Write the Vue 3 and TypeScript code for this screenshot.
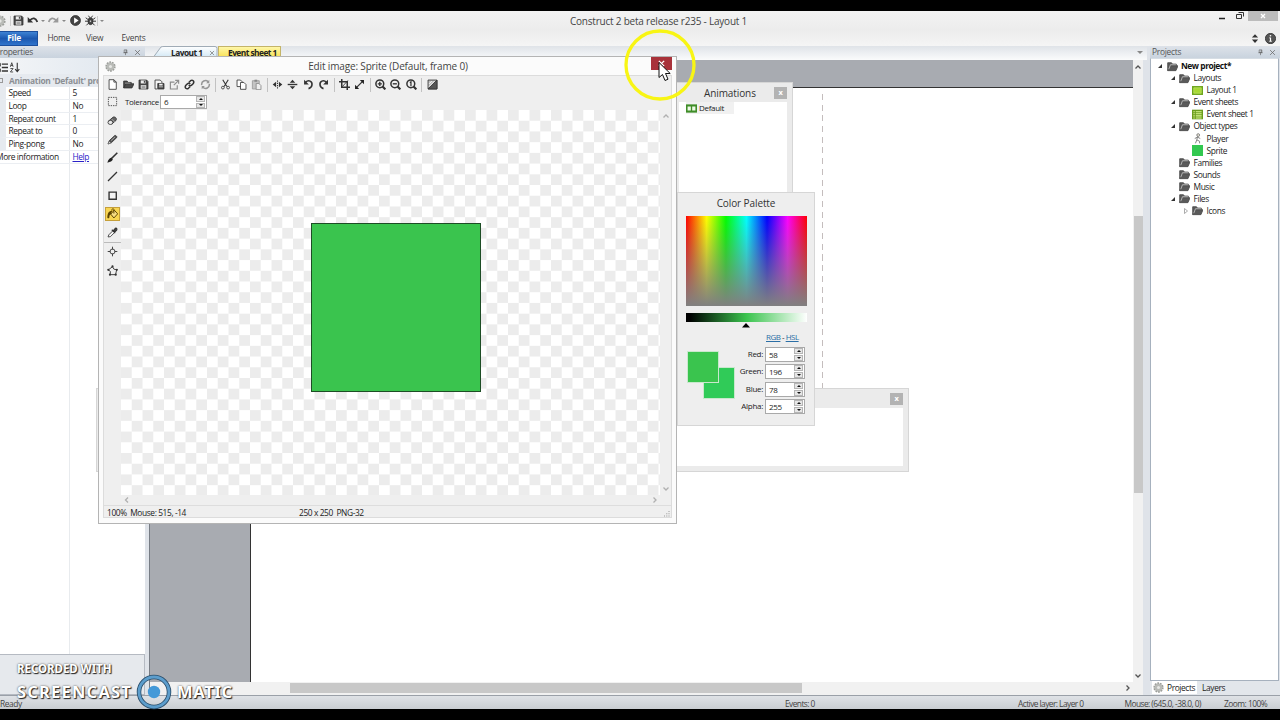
<script setup lang="ts">
interface TreeNode {
  label: string
  level: number
  icon: string
  arrow?: 'open' | 'closed'
  bold?: boolean
}

const icons: Record<string, string> = {
  gear: '<circle cx="8" cy="8" r="6" fill="#c4c6c2" stroke="#9b9d99" stroke-width="3" stroke-dasharray="2.4 1.3"/><circle cx="8" cy="8" r="5.500" fill="#b9bbb7" stroke="none"/><circle cx="8" cy="8" r="2.200" fill="#e6e7e4" stroke="none"/>',
  file: '<path d="M3 1h7L13.500 4.500V15H3zM10 1v3.500h3.500" fill="#fff"/>',
  open: '<path d="M1 13V3h5l1.500 2H12v2M1 13l3-6h12l-3 6z" fill="#4b4b4b"/><path d="M3 6h8" stroke="#aaa"/>',
  save: '<path d="M1.500 1.500h11l2 2v11h-13z" fill="#444"/><path d="M4 2h7v4.500H4z" fill="#eee" stroke="none"/><path d="M8.500 2.500h1.500v3H8.500z" fill="#333" stroke="none"/><path d="M4 9h8v5H4z" fill="#f3f3f3" stroke="none"/><path d="M5 10.700h6M5 12.500h6" stroke-width=".7"/>',
  export: '<path d="M5 14.500H1.500v-13H9L11.500 4v2" fill="#f5f5f5"/><path d="M5.500 6.500h9v8h-9z" fill="#444"/><path d="M7.500 7h5v2.500h-5zM7 11h6v1H7z" fill="#eee" stroke="none"/>',
  popout: '<path d="M8 4.500H2v10h10V9M7 9l6-6M9 2h5v5" stroke="#8c8c8c" stroke-width="1.700"/>',
  link: '<g stroke-width="2.200"><path d="M7 5l2.500-2.500c3-2 6 1 4 4L11 9c-1.500 1.300-3 1-4-.3"/><path d="M9 11l-2.500 2.500c-3 2-6-1-4-4L5 7c1.500-1.300 3-1 4 .3"/></g>',
  refresh: '<g stroke="#969696" stroke-width="2.200"><path d="M2.500 9C1.500 3 8 .5 12 4M13.500 7c1 6-5.500 8.500-9.500 5"/></g><path d="M13.500 1v5H9zM2.500 15v-5H7z" fill="#969696" stroke="none"/>',
  cut: '<path d="M4 1l6 10M12 1L6 11" stroke-width="1.600"/><circle cx="4.200" cy="12.500" r="2"/><circle cx="11.800" cy="12.500" r="2"/>',
  copy: '<path d="M1.500 1.500h5L9 4v7H1.500z" fill="#fff"/><path d="M6.500 5h5L14.500 8v7h-8z" fill="#fff"/>',
  paste: '<path d="M2 2.500h10v12H2z" fill="#c4c4c4" stroke="#999"/><path d="M5 1h4v3H5z" fill="#888" stroke="none"/><path d="M7.500 6.500h4l3 3v6h-7z" fill="#eee" stroke="#888"/>',
  mirror: '<path d="M8 2v12" stroke-dasharray="2 1.300" stroke-width="1.500"/><path d="M6 4v8L1 8zM10 4v8L15 8z" fill="#333" stroke="none"/>',
  flip: '<path d="M1 8h14" stroke-width="2"/><path d="M4 5.500h8L8 1zM4 10.500h8L8 15z" fill="#333" stroke="none"/>',
  ccw: '<path d="M3.500 5C8 .5 14 3 13 9c-.5 3-3 4.500-5 5" stroke-width="2.300"/><path d="M1.500 1v7H8.500z" fill="#333" stroke="none"/>',
  cw: '<path d="M12.500 5C8 .5 2 3 3 9c.5 3 3 4.500 5 5" stroke-width="2.300"/><path d="M14.500 1v7H7.500z" fill="#333" stroke="none"/>',
  crop: '<path d="M4 0v12h12M0 4h12v12" stroke-width="2.200"/><path d="M5 11l8-9"/>',
  resize: '<path d="M3.500 12.500l9-9" stroke-width="1.800"/><path d="M14.500 1.500v6l-6-6zM1.500 14.500v-6l6 6z" fill="#222" stroke="none"/>',
  zoomin: '<circle cx="7" cy="7" r="5.700" stroke-width="2.200"/><path d="M11 11l4 4" stroke-width="3.200"/><path d="M4 7h6M7 4v6" stroke-width="2"/>',
  zoomout: '<circle cx="7" cy="7" r="5.700" stroke-width="2.200"/><path d="M11 11l4 4" stroke-width="3.200"/><path d="M4 7h6" stroke-width="2"/>',
  zoomone: '<circle cx="7" cy="7" r="5.700" stroke-width="2.200"/><path d="M11 11l4 4" stroke-width="3.200"/><path d="M5.500 5L7.200 4v6.500" stroke-width="1.800"/>',
  contrast: '<path d="M1.500 1.500h13v13h-13z" fill="#bbb"/><path d="M14.500 1.500v13h-13z" fill="#555"/><path d="M3 7l4-4M3 11l8-8" stroke="#fff"/>',
  marquee: '<path d="M2 2h12v12H2z" stroke-dasharray="2 1.400" stroke-width="1.200"/>',
  eraser: '<path d="M2 9l7-6c3-1 6 2 4 5l-6 5z" fill="#666"/><ellipse cx="5" cy="10.800" rx="3.600" ry="3" fill="#e8e8e8"/><path d="M7 6l4 4" stroke="#bbb"/>',
  pencil: '<path d="M1.500 14.500l2-5 8-7.500c2 0 3 1.500 2.800 3L6.500 12.500z" fill="#555"/><path d="M6 9.500l5.500-5" stroke="#bbb"/><path d="M1.500 14.500l1.500-4 3 2.500z" fill="#ddd" stroke="#444" stroke-width=".6"/>',
  brush: '<path d="M6 10L15 1" stroke-width="2.200"/><path d="M.5 15.500c1.500-4.500 3-6.500 5.500-7L8.500 11c-1 2.500-3.500 3.500-8 4.500z" fill="#222" stroke="none"/>',
  line: '<path d="M1.500 14.500l13-13" stroke-width="1.800"/>',
  rect: '<path d="M3 3h10.500v10.500H3z" fill="#f3f3f3" stroke-width="2"/>',
  bucket: '<path d="M5.500 9l5-6 5 5.500-5.500 6z" fill="#f7dd84" stroke="#5c4300" stroke-width="1.400"/><path d="M10 8V2C9 0 7 1 7 4" stroke="#5c4300" stroke-width="1.400"/><path d="M7.500 4.500C2.500 4 .5 8 .5 14c1 1.500 3 1 3-1 0-2 .5-3 2-4z" fill="#5c4300" stroke="none"/>',
  dropper: '<path d="M1.500 14.500l1-3 6-6 2.500 2.500-6 6z" fill="#f5f5f5"/><path d="M7 4l5 5M9 5.500l3-3.500c2-1 3 1 2 2.500L11 7.500z" fill="#444" stroke-width="1.700"/>',
  origin: '<circle cx="8" cy="8" r="3.600" stroke-width="1.300"/><path d="M8 1v4M8 11v4M1 8h4M11 8h4" stroke-width="1.300"/>',
  polygon: '<path d="M8 2.500L10 6l4 1-1.500 7h-8L5 9.500 2 7z" stroke-width="1.300"/><g fill="#333" stroke="none"><circle cx="8" cy="2" r="1.600"/><circle cx="14.300" cy="7" r="1.600"/><circle cx="12.700" cy="14" r="1.600"/><circle cx="4.300" cy="14" r="1.600"/><circle cx="1.900" cy="7" r="1.600"/></g>',
  undo: '<path d="M4 8c4-5 9-4 11 2" stroke-width="2.600"/><path d="M1 3v8h8z" fill="#333" stroke="none"/>',
  redo: '<path d="M12 8C8 3 3 4 1 10" stroke="#999" stroke-width="2.600"/><path d="M15 3v8H7z" fill="#999" stroke="none"/>',
  play: '<circle cx="8" cy="8" r="7.200" fill="#444" stroke="#333"/><path d="M6 3.800v8.400L12.500 8z" fill="#fff" stroke="none"/>',
  bug: '<ellipse cx="8" cy="9" rx="3.600" ry="5" fill="#444"/><path d="M1 4l4 3M15 4l-4 3M0 9h16M2 15l4-4M14 15l-4-4M5 1l2 3M11 1L9 4" stroke-width="1.400"/><circle cx="8" cy="9" r="1.700" fill="#ddd"/>',
  folder: '<path d="M1 14V2.500h5.500L8 4.500h5.500V7M1 14l3-7h12l-3 7z" fill="#5a5a5a" stroke="#4a4a4a"/><path d="M2.500 12L5 5.500h8" stroke="#c4c4c4" stroke-width="1.300"/>',
  layout: '<path d="M0 1.500h16v13H0z" fill="#6ca51a" stroke="none"/><path d="M2.500 4h11v8h-11z" fill="#a6d834" stroke="#d0ec7c" stroke-width=".8"/>',
  sheet: '<path d="M0 1h16v14H0z" fill="#6a9c1c" stroke="none"/><path d="M2 4h2M2 7h2M2 10h2M2 13h2M5.500 4H14M5.500 7H14M5.500 10H14M5.500 13H14" stroke="#daf590" stroke-width="1.500"/>',
  player: '<g stroke="#777" stroke-width="1.300"><circle cx="9" cy="3" r="2" fill="#f3efe1"/><path d="M8 5L7 10l4 2v3M7 10l-2 5M8 6l4 2M8 6L4 8"/></g>',
  sprite: '<path d="M0 0h16v16H0z" fill="#32c850" stroke="none"/>',
  az: '<path d="M12 1v12M9 10.500l3 3.500 3-3.500" stroke-width="1.600"/><path d="M2 7l2-6 2 6M2.500 5h3M2 9.500h4l-4 5h4" stroke-width="1.200"/>',
  cat: '<path d="M7 3h9M7 8h9M7 13h9" stroke-width="2"/><path d="M1 2h4v4H1zM1 10h4v4H1z"/>',
  info: '<circle cx="8" cy="8" r="7.500" fill="#555" stroke="#333"/><path d="M8 7v5M6.500 7H8M6.300 12h3.500" stroke="#fff" stroke-width="1.700"/><circle cx="8" cy="4" r="1.200" fill="#fff" stroke="none"/>',
  updown: '<path d="M3 6.500h10L8 1zM3 9.500h10L8 15z" fill="#333" stroke="none"/>',
  pin: '<path d="M5 2h6v6H5zM9.500 2v6M3 8.500h10M8 9v5" stroke="#555" stroke-width="1.300"/>',
  cross: '<path d="M2.500 2.500l11 11M13.500 2.500l-11 11" stroke="#666" stroke-width="1.700"/>',
  frame: '<path d="M0 2h16v12H0z" fill="#3f8d28" stroke="none"/><path d="M2.300 5h4.700v6H2.300zM9 5h4.700v6H9z" fill="#eefae6" stroke="none"/>',
}

const toolbar: string[][] = [
  ['file', 'open', 'save', 'export', 'popout', 'link', 'refresh'],
  ['cut', 'copy', 'paste'],
  ['mirror', 'flip', 'ccw', 'cw'],
  ['crop', 'resize'],
  ['zoomin', 'zoomout', 'zoomone'],
  ['contrast'],
]
const tools = ['marquee', 'eraser', 'pencil', 'brush', 'line', 'rect', 'bucket', 'dropper', 'origin', 'polygon']

const properties = [
  { name: 'Speed', value: '5' },
  { name: 'Loop', value: 'No' },
  { name: 'Repeat count', value: '1' },
  { name: 'Repeat to', value: '0' },
  { name: 'Ping-pong', value: 'No' },
]

const tree: TreeNode[] = [
  { label: 'New project*', level: 0, icon: 'folder', arrow: 'open', bold: true },
  { label: 'Layouts', level: 1, icon: 'folder', arrow: 'open' },
  { label: 'Layout 1', level: 2, icon: 'layout' },
  { label: 'Event sheets', level: 1, icon: 'folder', arrow: 'open' },
  { label: 'Event sheet 1', level: 2, icon: 'sheet' },
  { label: 'Object types', level: 1, icon: 'folder', arrow: 'open' },
  { label: 'Player', level: 2, icon: 'player' },
  { label: 'Sprite', level: 2, icon: 'sprite' },
  { label: 'Families', level: 1, icon: 'folder' },
  { label: 'Sounds', level: 1, icon: 'folder' },
  { label: 'Music', level: 1, icon: 'folder' },
  { label: 'Files', level: 1, icon: 'folder', arrow: 'open' },
  { label: 'Icons', level: 2, icon: 'folder', arrow: 'closed' },
]

const channels = [
  { name: 'Red:', value: 58 },
  { name: 'Green:', value: 196 },
  { name: 'Blue:', value: 78 },
  { name: 'Alpha:', value: 255 },
]
</script>

<template>
  <div class="screen">
    <header class="titlebar">
      <div class="quick">
        <svg class="ico q-gear" viewBox="0 0 16 16" v-html="icons.gear" />
        <i class="qsep" />
        <svg class="ico q-save" viewBox="0 0 16 16" v-html="icons.save" />
        <svg class="ico q-undo" viewBox="0 0 16 16" v-html="icons.undo" />
        <i class="dd" />
        <svg class="ico q-redo" viewBox="0 0 16 16" v-html="icons.redo" />
        <i class="dd" />
        <svg class="ico q-play" viewBox="0 0 16 16" v-html="icons.play" />
        <svg class="ico q-bug" viewBox="0 0 16 16" v-html="icons.bug" />
        <i class="qsep last" />
        <i class="dd more" />
      </div>
      <span class="app-title">Construct 2 beta release r235 - Layout 1</span>
      <div class="winbtns">
        <svg width="62" height="15" viewBox="0 0 62 15">
          <path d="M3 7.500h6" stroke="#222" stroke-width="1.500" />
          <path d="M22.500 1.500h5v4M20.500 3.500h5v4h-5z" fill="none" stroke="#333" />
          <path d="M32 0h30v10H32z" fill="#bcbcbc" />
          <path d="M45 3l4 4M49 3l-4 4" stroke="#fff" stroke-width="1.300" />
        </svg>
      </div>
    </header>

    <nav class="ribbon">
      <b class="file">File</b>
      <span class="r-home">Home</span>
      <span class="r-view">View</span>
      <span class="r-events">Events</span>
      <svg class="ico r-ud" viewBox="0 0 16 16" v-html="icons.updown" />
      <svg class="ico r-info" viewBox="0 0 16 16" v-html="icons.info" />
    </nav>

    <main class="dock">
      <aside class="left">
        <div class="phead">
          <span class="pname">Properties</span>
          <svg class="ico tiny" viewBox="0 0 16 16" v-html="icons.pin" />
          <svg class="ico tiny" viewBox="0 0 16 16" v-html="icons.cross" />
        </div>
        <div class="ptools">
          <svg class="ico" viewBox="0 0 16 16" v-html="icons.cat" />
          <svg class="ico" viewBox="0 0 16 16" v-html="icons.az" />
        </div>
        <div class="pgrid">
          <div class="pcat"><i class="minus" /><b>Animation 'Default' properties</b></div>
          <div v-for="p in properties" :key="p.name" class="prow">
            <span class="pn">{{ p.name }}</span><span class="pv">{{ p.value }}</span>
          </div>
          <div class="prow info"><span class="pn">More information</span><span class="pv"><u>Help</u></span></div>
          <div class="prest" />
        </div>
        <div class="pdesc" />
      </aside>

      <section class="center">
        <div class="tabs">
          <div class="tab active">
            <svg class="tabshape" viewBox="0 0 68 13" preserveAspectRatio="none">
              <defs>
                <linearGradient id="tb" x2="0" y2="1"><stop offset="0" stop-color="#fff" /><stop offset="1" stop-color="#cbe4f3" /></linearGradient>
              </defs>
              <path d="M0 13L9 1Q10 .5 12 .5H63q2 0 2 2V13" fill="url(#tb)" stroke="#8c99a6" stroke-width=".8" />
            </svg>
            <b>Layout 1</b>
            <svg class="ico tabx" viewBox="0 0 16 16" v-html="icons.cross" />
          </div>
          <div class="tab sheet"><b>Event sheet 1</b></div>
          <i class="dd tabmenu" />
        </div>
        <div class="work">
          <div class="stage">
            <div class="margin-left" />
            <div class="page">
              <div class="page-top" />
              <div class="page-body"><div class="bounds" /></div>
            </div>
          </div>
          <div class="vscroll">
            <svg class="chev" viewBox="0 0 8 6"><path d="M1.500 4.500L4 2l2.500 2.500" /></svg>
            <div class="vthumb" />
            <svg class="chev" viewBox="0 0 8 6"><path d="M1.500 1.500L4 4l2.500-2.500" /></svg>
          </div>
        </div>
        <div class="hscroll">
          <div class="hthumb" />
          <svg class="chev hright" viewBox="0 0 6 8"><path d="M1.500 1.500L4 4 1.500 6.500" /></svg>
        </div>
      </section>

      <aside class="right">
        <div class="phead">
          <span class="pname">Projects</span>
          <svg class="ico tiny" viewBox="0 0 16 16" v-html="icons.pin" />
          <svg class="ico tiny" viewBox="0 0 16 16" v-html="icons.cross" />
        </div>
        <div class="tree">
          <div v-for="n in tree" :key="n.label" class="node" :class="['l' + n.level, { bold: n.bold }]">
            <svg class="arrow" viewBox="0 0 6 6">
              <path v-if="n.arrow === 'open'" d="M5 1v4H1z" fill="#333" />
              <path v-else-if="n.arrow === 'closed'" d="M1.500 .5v5L4.500 3z" fill="#fff" stroke="#888" stroke-width=".7" />
            </svg>
            <svg class="ico" viewBox="0 0 16 16" v-html="icons[n.icon]" />
            <span>{{ n.label }}</span>
          </div>
        </div>
        <div class="ptabs">
          <div class="ptab on"><svg class="ico" viewBox="0 0 16 16" v-html="icons.gear" /><span>Projects</span></div>
          <div class="ptab">Layers</div>
        </div>
      </aside>
    </main>

    <footer class="status">
      <span class="s1">Ready</span>
      <span class="s2">Events: 0</span>
      <span class="s3">Active layer: Layer 0</span>
      <span class="s4">Mouse: (645.0, -38.0, 0)</span>
      <span class="s5">Zoom: 100%</span>
    </footer>

    <div class="win frames">
      <div class="whead"><span class="wclose">x</span></div>
      <div class="wbody" />
    </div>

    <div class="win anims">
      <div class="whead"><span class="wtitle">Animations</span><span class="wclose">x</span></div>
      <div class="wbody">
        <div class="anim"><svg class="ico" viewBox="0 0 16 16" v-html="icons.frame" /><span>Default</span></div>
      </div>
    </div>

    <div class="win palette">
      <div class="ptitle">Color Palette</div>
      <div class="hues" />
      <div class="lum" />
      <svg class="mark" viewBox="0 0 8 5"><path d="M4 0l4 4.500H0z" fill="#000" /></svg>
      <div class="modes"><u>RGB</u> - <u>HSL</u></div>
      <div class="mix">
        <div class="swatches"><i class="sw back" /><i class="sw front" /></div>
        <div class="fields">
          <div v-for="c in channels" :key="c.name" class="field">
            <label>{{ c.name }}</label>
            <div class="num"><span>{{ c.value }}</span><div class="spin"><i class="up" /><i class="down" /></div></div>
          </div>
        </div>
      </div>
    </div>

    <div class="dialog">
      <div class="dhead">
        <svg class="ico" viewBox="0 0 16 16" v-html="icons.gear" />
        <span class="dtitle">Edit image: Sprite (Default, frame 0)</span>
        <span class="dclose"><svg viewBox="0 0 8 8"><path d="M1 1l6 6M7 1L1 7" /></svg></span>
      </div>
      <div class="dbody">
        <div class="tbar">
          <div v-for="(g, i) in toolbar" :key="i" class="tgroup">
            <span v-for="n in g" :key="n" class="tcell"><svg class="ico" viewBox="0 0 16 16" v-html="icons[n]" /></span>
          </div>
        </div>
        <div class="dmain">
          <div class="tools">
            <span v-for="t in tools" :key="t" class="tool" :class="t"><svg class="ico" viewBox="0 0 16 16" v-html="icons[t]" /></span>
          </div>
          <div class="editor">
            <div class="opts">
              <label>Tolerance</label>
              <div class="num"><span>6</span><div class="spin"><i class="up" /><i class="down" /></div></div>
            </div>
            <div class="view">
              <div class="checker"><div class="sprite" /></div>
              <div class="dv">
                <svg class="chev" viewBox="0 0 8 6"><path d="M1.500 4.500L4 2l2.500 2.500" /></svg>
                <svg class="chev" viewBox="0 0 8 6"><path d="M1.500 1.500L4 4l2.500-2.500" /></svg>
              </div>
            </div>
            <div class="dh">
              <svg class="chev" viewBox="0 0 6 8"><path d="M4 1.500L1.500 4 4 6.500" /></svg>
              <svg class="chev" viewBox="0 0 6 8"><path d="M1.500 1.500L4 4 1.500 6.500" /></svg>
            </div>
          </div>
        </div>
        <div class="dstatus">
          <span class="ds1">100%&nbsp; Mouse: 515, -14</span>
          <span class="ds2">250 x 250&nbsp; PNG-32</span>
          <svg class="grip" viewBox="0 0 6 6"><path d="M4.500 0h1v1h-1zM4.500 2.300h1v1h-1zM4.500 4.600h1v1h-1zM2.300 2.300h1v1h-1zM2.300 4.600h1v1h-1zM0 4.600h1v1H0z" fill="#999" /></svg>
        </div>
      </div>
    </div>

    <div class="brand">
      <div class="b1">RECORDED WITH</div>
      <div class="b2">
        <span class="bs">SCREENCAST</span>
        <svg class="ring" viewBox="0 0 36 36">
          <circle cx="18" cy="18" r="15" fill="none" stroke="#2c4f6c" stroke-width="4.500" />
          <circle cx="18" cy="18" r="15" fill="none" stroke="#5c9dcc" stroke-width="2.800" />
          <circle cx="18" cy="18" r="6.200" fill="#4499d8" />
        </svg>
        <span class="bm">MATIC</span>
      </div>
    </div>

    <svg class="pointer" viewBox="0 0 76 76">
      <circle cx="38" cy="38" r="34" fill="none" stroke="#f8f514" stroke-width="3.300" />
      <path d="M37 35.500v15l3.500-3 2.500 6 3-1.300-2.500-5.700h4.700z" fill="#fff" stroke="#111" stroke-width="1" />
    </svg>
  </div>
</template>

<style>
body {
  background: #000;
  overflow: hidden;
}
</style>

<style scoped>
* {
  box-sizing: border-box;
}
.screen {
  position: relative;
  width: 1280px;
  height: 720px;
  padding: 11px 0;
  display: flex;
  flex-direction: column;
  overflow: hidden;
  background: #000;
  color: #222;
  font: 8.400px/12px "Open Sans", "Noto Sans", sans-serif;
  letter-spacing: -0.400px;
  white-space: nowrap;
}
.ico {
  width: 11px;
  height: 11px;
  flex: none;
  fill: none;
  stroke: #333;
  stroke-width: 1.2;
}
.chev {
  width: 8px;
  height: 6px;
  fill: none;
  stroke: #555;
  stroke-width: 1.3;
}
.dd {
  width: 0;
  height: 0;
  flex: none;
  border: 2px solid transparent;
  border-top: 2.500px solid #888;
  border-bottom: 0;
}

.titlebar {
  height: 19px;
  flex: none;
  display: flex;
  justify-content: space-between;
  background: linear-gradient(#f3f3f3, #ececec);
}
.quick {
  display: flex;
  align-items: center;
  width: 566px;
  margin-left: -6px;
}
.q-gear {
  width: 12px;
  height: 12px;
}
.qsep {
  width: 1px;
  height: 10px;
  margin: 0 1px 0 4px;
  background: #ccc;
}
.q-save {
  margin-left: 1px;
}
.q-undo {
  margin: 0 3px 0 3px;
}
.q-redo {
  margin: 0 3px;
}
.q-play {
  margin-left: 4px;
}
.q-bug {
  margin-left: 4px;
}
.qsep.last {
  margin: 0 2px 0 1px;
}
.app-title {
  font-size: 10px;
  line-height: 20px;
  letter-spacing: -0.210px;
  color: #444;
}
.winbtns {
  width: 523px;
  display: flex;
  justify-content: flex-end;
  padding: 0 2px 0 0;
}

.ribbon {
  height: 16px;
  flex: none;
  display: flex;
  align-items: center;
  background: linear-gradient(#ececec, #f5f5f5);
  color: #444;
}
.file {
  width: 37.500px;
  height: 15px;
  border: 1px solid #1b4f9e;
  border-left: 0;
  background: linear-gradient(#3e83d4, #1c58b0 50%, #2f74cc);
  color: #fff;
  line-height: 12px;
  text-align: right;
  padding-right: 15.500px;
  letter-spacing: -0.200px;
}
.ribbon span {
  letter-spacing: -0.300px;
}
.r-home {
  width: 38.500px;
  margin-left: 10px;
}
.r-view {
  width: 35.500px;
}
.r-ud {
  margin-left: auto;
  width: 10px;
}
.r-info {
  margin: 0 4px 0 5px;
}

.dock {
  flex: 1;
  min-height: 0;
  display: flex;
  background: #dfe3e9;
  border-bottom: 1px solid #9aa0a8;
}
.phead {
  height: 12px;
  flex: none;
  display: flex;
  align-items: center;
  gap: 5px;
  padding: 0 4px 0 2px;
  background: linear-gradient(#dde2e9, #c9d3de);
  color: #555;
}
.pname {
  flex: 1;
  letter-spacing: -0.250px;
}
.ico.tiny {
  width: 7px;
  height: 7px;
}
.left {
  width: 145px;
  flex: none;
  display: flex;
  flex-direction: column;
}
.left .pname {
  margin-left: -7px;
}
.ptools {
  height: 16px;
  flex: none;
  display: flex;
  align-items: center;
  gap: 1px;
  padding: 2px 0 0 0;
  background: linear-gradient(90deg, #f3f5f7, #dde5ee);
}
.ptools .ico {
  margin-left: -3px;
  margin-right: 3px;
}
.pgrid {
  flex: 1;
  display: flex;
  flex-direction: column;
  background: #fff;
}
.pcat {
  height: 13px;
  display: flex;
  align-items: center;
  background: #e6eaef;
  color: #8c8f94;
}
.pcat b {
  width: 89px;
  overflow: hidden;
  margin-left: 6px;
  letter-spacing: -0.270px;
}
.minus {
  width: 3px;
  height: 5px;
  border: 1px solid #999;
  border-left: 0;
}
.prow {
  height: 12.800px;
  display: flex;
  border-left: 6px solid #e6eaef;
  border-bottom: 1px solid #ebeef2;
}
.pn {
  width: 64px;
  padding-left: 2.500px;
  border-right: 1px solid #e3e6ea;
}
.pv {
  padding-left: 2.500px;
}
.info {
  border-left: 0;
}
.info .pn {
  width: 70px;
  padding: 0;
  text-indent: -4px;
}
.info u {
  color: #2b22c8;
}
.prest {
  flex: 1;
  width: 70px;
  border-right: 1px solid #e8ebee;
}
.pdesc {
  height: 41px;
  flex: none;
  border: 1px solid #b5bac2;
  border-left: 0;
  background: #e6e9ed;
}

.center {
  width: 998px;
  flex: none;
  margin-left: 4px;
  display: flex;
  flex-direction: column;
  border-left: 1px solid #777c84;
}
.tabs {
  height: 14px;
  flex: none;
  display: flex;
  margin-left: -5px;
  padding-left: 7px;
  background: linear-gradient(#dfe3e8, #fafbfc);
}
.tab {
  height: 13px;
  position: relative;
  line-height: 13px;
  color: #222;
}
.tab.active {
  width: 66px;
  padding-left: 19px;
  display: flex;
  align-items: center;
}
.tabshape {
  position: absolute;
  left: 0;
  top: 0;
  width: 68px;
  height: 13px;
}
.tab b {
  position: relative;
  letter-spacing: -0.550px;
}
.tabx {
  position: relative;
  width: 6px;
  height: 6px;
  margin-left: auto;
  margin-right: 3px;
}
.tab.sheet {
  width: 63px;
  padding-left: 9px;
  background: linear-gradient(#fff7a8, #f6dd48);
  border: 1px solid #c4b468;
  border-bottom: 0;
  line-height: 11px;
}
.tabmenu {
  margin: 5px 4px 0 auto;
  border-width: 3px 3px 0;
}
.work {
  flex: 1;
  min-height: 0;
  display: flex;
}
.stage {
  flex: 1;
  display: flex;
  background: #a8abb1;
}
.margin-left {
  width: 100px;
}
.page {
  flex: 1;
  display: flex;
  flex-direction: column;
}
.page-top {
  height: 28px;
  margin-left: -1px;
  border-bottom: 1px solid #333;
}
.page-body {
  flex: 1;
  padding: 6px 0 0 571px;
  background: #fff;
  border-left: 1px solid #333;
}
.bounds {
  height: 300px;
  width: 1px;
  background: repeating-linear-gradient(#c4bdbd 0 6px, #fff 6px 10.700px);
}
.vscroll {
  width: 10px;
  display: flex;
  flex-direction: column;
  align-items: center;
  padding: 4px 0 3px;
  background: #f1f1f1;
}
.vthumb {
  width: 9px;
  height: 277px;
  margin: 146px 0 auto;
  background: #c8c8c8;
}
.hscroll {
  height: 13px;
  flex: none;
  display: flex;
  align-items: center;
  justify-content: space-between;
  padding: 0 12px 2px 140px;
  background: #f1f1f1;
}
.center .hscroll,
.center .work {
  margin-right: 4px;
}
.hthumb {
  width: 512px;
  height: 10px;
  background: #c8c8c8;
}
.hright {
  width: 6px;
  height: 8px;
}

.right {
  flex: 1;
  margin-left: 3px;
  display: flex;
  flex-direction: column;
}
.tree {
  flex: 1;
  margin-right: 1px;
  padding-top: 1px;
  background: #fff;
  border: 1px solid #a6b1be;
  border-top-color: #d6dde4;
}
.node {
  height: 12.080px;
  display: flex;
  align-items: center;
  padding-left: 6px;
}
.node.l1 {
  padding-left: 18.500px;
}
.node.l2 {
  padding-left: 31.500px;
}
.node .ico {
  margin: 0 3.500px 0 3.500px;
}
.arrow {
  width: 6px;
  height: 6px;
}
.bold {
  font-weight: 700;
  color: #111;
  letter-spacing: -0.450px;
}
.ptabs {
  height: 14px;
  flex: none;
  display: flex;
  padding-left: 2px;
  background: #e2e6eb;
}
.ptab {
  padding: 1px 5px 0;
}
.ptab.on {
  display: flex;
  align-items: center;
  padding: 0 2px 0 1px;
  background: #fff;
  height: 13px;
}
.ptab.on .ico {
  margin-right: 3px;
}

.status {
  height: 13px;
  flex: none;
  display: flex;
  background: linear-gradient(#dfe2e6, #c9cdd2);
  color: #444;
  line-height: 16px;
  letter-spacing: -0.560px;
}
.s1 {
  width: 785px;
  letter-spacing: -0.400px;
}
.s2 {
  width: 233px;
}
.s3 {
  width: 106.500px;
}
.s4 {
  width: 99.500px;
}
.s5 {
  letter-spacing: -0.500px;
}

.win {
  position: absolute;
  background: #ebebeb;
  border: 1px solid #d6d6d6;
}
.whead {
  display: flex;
  align-items: center;
}
.wtitle {
  flex: 1;
  font-size: 10px;
  letter-spacing: -0.100px;
  color: #333;
}
.wclose {
  width: 13px;
  height: 12px;
  margin-left: auto;
  background: #b3b3b3;
  color: #fff;
  font-size: 7.500px;
  font-weight: 700;
  line-height: 11px;
  text-align: center;
}
.wbody {
  background: #fff;
}
.frames {
  left: 96px;
  top: 388px;
  width: 813px;
  height: 84px;
}
.frames .whead {
  height: 19px;
  padding-right: 5px;
}
.frames .wbody {
  height: 58px;
  margin: 0 5px;
}
.anims {
  left: 676px;
  top: 82px;
  width: 117px;
  height: 120px;
}
.anims .whead {
  height: 19px;
  padding: 0 5px 0 27px;
}
.anims .wbody {
  height: 92px;
  margin: 0 5px 0 2px;
}
.anim {
  width: 48px;
  height: 12px;
  margin-left: 7px;
  display: flex;
  align-items: center;
  gap: 2px;
  background: #f1f1f1;
  font-size: 8px;
  letter-spacing: -0.300px;
}

.palette {
  left: 677px;
  top: 192px;
  width: 138px;
  height: 234px;
  padding: 0 8px;
  background: #eee;
}
.ptitle {
  height: 23px;
  font-size: 10px;
  line-height: 21px;
  letter-spacing: -0.100px;
  text-align: center;
  color: #333;
}
.hues {
  width: 121px;
  height: 90px;
  background: linear-gradient(rgba(128, 128, 128, 0), #808080), linear-gradient(90deg, #f00, #ff0 17%, #0f0 33%, #0ff 50%, #00f 67%, #f0f 84%, #f00);
}
.lum {
  width: 121px;
  height: 9px;
  margin-top: 7px;
  background: linear-gradient(90deg, #000 3%, #3ac44e 50%, #fff);
}
.mark {
  display: block;
  width: 8px;
  height: 5px;
  margin: 1px 0 0 56px;
}
.modes {
  height: 12px;
  margin-top: 3px;
  padding-left: 80px;
  font-size: 8px;
  letter-spacing: -0.500px;
}
.modes u {
  color: #2a6ea6;
}
.mix {
  display: flex;
  margin: 4px 1px 0 0;
}
.swatches {
  width: 49px;
  height: 49px;
  margin: 4px 0 0 1px;
  display: grid;
  grid-template: repeat(3, 16px) / repeat(3, 16px);
}
.sw {
  border: 1px solid #c9e8cd;
}
.back {
  grid-area: 2 / 2 / 4 / 4;
  background: #30cb58;
}
.front {
  grid-area: 1 / 1 / 3 / 3;
  background: #3ac44e;
}
.fields {
  flex: 1;
}
.field {
  height: 17.400px;
  display: flex;
  justify-content: flex-end;
  align-items: flex-start;
  gap: 2px;
  line-height: 14px;
  font-size: 8px;
  letter-spacing: -0.300px;
}
.num {
  width: 40px;
  height: 15px;
  display: flex;
  justify-content: space-between;
  padding: 0 1px 0 3px;
  background: #fff;
  border: 1px solid #a9a9a9;
  line-height: 13px;
}
.spin {
  width: 9px;
  display: flex;
  flex-direction: column;
  gap: 1px;
}
.spin i {
  flex: 1;
  display: flex;
  align-items: center;
  justify-content: center;
  background: #e6e6e6;
  border: 1px solid #b5b5b5;
}
.spin i::after {
  content: "";
  border: 2px solid transparent;
}
.spin .up::after {
  border-bottom-color: #111;
  border-top: 0;
}
.spin .down::after {
  border-top-color: #111;
  border-bottom: 0;
}

.dialog {
  position: absolute;
  left: 98px;
  top: 56px;
  width: 579px;
  height: 468px;
  padding: 0 4px 5px;
  background: #fbfbfb;
  border: 1px solid #b4b4b4;
  display: flex;
  flex-direction: column;
}
.dhead {
  height: 18px;
  flex: none;
  display: flex;
  align-items: center;
  justify-content: space-between;
  padding-left: 2px;
}
.dtitle {
  margin-left: 9px;
  font-size: 10px;
  letter-spacing: -0.150px;
  color: #444;
}
.dclose {
  width: 21px;
  height: 13px;
  align-self: flex-start;
  display: flex;
  align-items: center;
  justify-content: center;
  background: #a8323a;
}
.dclose svg {
  width: 7px;
  height: 7px;
  stroke: #fff;
  stroke-width: 1.600;
}
.dbody {
  flex: 1;
  min-height: 0;
  display: flex;
  flex-direction: column;
  background: #efefef;
  border: 1px solid #dcdcdc;
}
.tbar {
  height: 17px;
  flex: none;
  display: flex;
  align-items: center;
  padding-left: 1.300px;
}
.tgroup {
  display: flex;
}
.tgroup + .tgroup {
  margin-left: 2.500px;
  padding-left: 2px;
  border-left: 1px solid #c2c2c2;
}
.tcell {
  width: 15.350px;
  height: 14px;
  display: flex;
  align-items: center;
  justify-content: center;
}
.dmain {
  flex: 1;
  min-height: 0;
  display: flex;
}
.tools {
  width: 17px;
  flex: none;
  margin-top: -0.500px;
}
.tool {
  height: 18.700px;
  display: flex;
  align-items: center;
  justify-content: center;
}
.tool.bucket {
  width: 15px;
  height: 14.700px;
  margin: 2px 1px;
  background: #f8d552;
  border: 1px solid #c59f3a;
}
.tool.origin {
  border-top: 1px solid #bbb;
}
.editor {
  flex: 1;
  display: flex;
  flex-direction: column;
}
.opts {
  height: 17px;
  flex: none;
  display: flex;
  align-items: center;
  gap: 2px;
  padding: 2px 0 1px 4px;
  font-size: 8px;
  letter-spacing: -0.300px;
}
.opts label {
  width: 33px;
}
.opts .num {
  width: 47px;
  height: 14px;
  line-height: 12px;
}
.view {
  flex: 1;
  display: flex;
}
.checker {
  width: 539px;
  padding: 113px 0 0 190px;
  background: repeating-conic-gradient(#fff 0 25%, #ececec 0 50%) 0 0 / 21.500px 21.440px;
}
.sprite {
  width: 170px;
  height: 169px;
  background: #3ac44e;
  border: 1px solid #1d4d25;
}
.dv {
  flex: 1;
  display: flex;
  flex-direction: column;
  align-items: center;
  justify-content: space-between;
  padding: 3px 0 3px 1px;
}
.dv .chev,
.dh .chev {
  stroke: #b0b0b0;
}
.dh {
  height: 10px;
  flex: none;
  display: flex;
  align-items: center;
  justify-content: space-between;
  padding: 0 13px 0 3px;
}
.dh .chev {
  width: 6px;
  height: 8px;
}
.dstatus {
  height: 12px;
  flex: none;
  display: flex;
  border-top: 1px solid #ddd;
  padding-left: 3px;
  line-height: 14px;
}
.ds1 {
  width: 192px;
}
.grip {
  width: 6px;
  height: 6px;
  margin: 5px 1px 0 auto;
}

.brand {
  position: absolute;
  left: 17px;
  top: 661px;
  color: #fff;
  font-family: "Noto Sans", "Open Sans", sans-serif;
  font-weight: 700;
  text-shadow: 1px 1px 1px #222, 0 0 2px #444;
}
.b1 {
  font-size: 11.500px;
  line-height: 15px;
  letter-spacing: -0.050px;
}
.b2 {
  display: flex;
  align-items: center;
  height: 31px;
  font-size: 16.500px;
  letter-spacing: 0.700px;
}
.bs {
  width: 119px;
  letter-spacing: 1.200px;
}
.ring {
  width: 36px;
  height: 36px;
  margin-right: 5px;
}
.pointer {
  position: absolute;
  left: 622px;
  top: 27px;
  width: 76px;
  height: 76px;
}
</style>
